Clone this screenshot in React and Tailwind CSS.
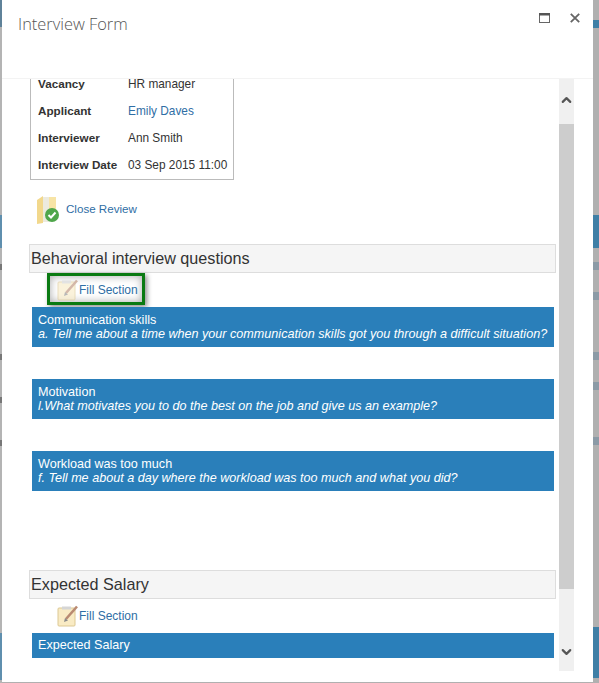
import { ChevronUp, ChevronDown } from "lucide-react";

const details = [
  { label: "Vacancy", value: "HR manager" },
  { label: "Applicant", value: "Emily Daves", link: true },
  { label: "Interviewer", value: "Ann Smith" },
  { label: "Interview Date", value: "03 Sep 2015 11:00" },
];

const questions = [
  {
    title: "Communication skills",
    text: "a. Tell me about a time when your communication skills got you through a difficult situation?",
  },
  {
    title: "Motivation",
    text: "l.What motivates you to do the best on the job and give us an example?",
  },
  {
    title: "Workload was too much",
    text: "f. Tell me about a day where the workload was too much and what you did?",
  },
];

// page behind the dialog, only a sliver of it shows on each side
const leftEdge = [
  { h: 27, color: "#5f8299" },
  { h: 188, color: "#b4b4b4" },
  { h: 33, color: "#5f8fae" },
  { h: 16, color: "#b4b4b4" },
  { h: 6, color: "#777777" },
  { h: 84, color: "#b4b4b4" },
  { h: 6, color: "#777777" },
  { h: 37, color: "#b4b4b4" },
  { h: 6, color: "#777777" },
  { h: 37, color: "#b4b4b4" },
  { h: 6, color: "#777777" },
  { h: 187, color: "#b4b4b4" },
  { h: 47, color: "#5f8fae" },
  { h: 3, color: "#b4b4b4" },
];

const rightEdge = [
  { h: 20, color: "#b0b0b0" },
  { h: 8, color: "#3f7fa6" },
  { h: 187, color: "#b0b0b0" },
  { h: 33, color: "#3f7fa6" },
  { h: 14, color: "#b0b0b0" },
  { h: 8, color: "#8b9aa6" },
  { h: 22, color: "#b0b0b0" },
  { h: 8, color: "#8b9aa6" },
  { h: 52, color: "#b0b0b0" },
  { h: 8, color: "#8b9aa6" },
  { h: 22, color: "#b0b0b0" },
  { h: 8, color: "#8b9aa6" },
  { h: 47, color: "#b0b0b0" },
  { h: 8, color: "#8b9aa6" },
  { h: 182, color: "#b0b0b0" },
  { h: 51, color: "#3f7fa6" },
  { h: 5, color: "#b0b0b0" },
];

function Edge({ parts, className }) {
  return (
    <div className={`flex shrink-0 flex-col ${className}`}>
      {parts.map((p, i) => (
        <div key={i} style={{ height: p.h, backgroundColor: p.color }} />
      ))}
    </div>
  );
}

function NoteIcon() {
  return (
    <svg width="22" height="22" viewBox="0 0 22 22" className="shrink-0">
      <rect x="1" y="3" width="17" height="18" rx="1" fill="#f9ebc4" stroke="#dcc893" />
      <rect x="5" y="1.5" width="9" height="3" fill="#d5d5d5" />
      <path d="M9 14 L20 1.5" stroke="#b98a72" strokeWidth="2.6" />
      <path d="M7 17 L8 13 L11 15.5 Z" fill="#8a8a8a" />
    </svg>
  );
}

function FolderIcon() {
  return (
    <svg width="26" height="32" viewBox="0 0 26 32">
      <path d="M1 7 L7 3 L7 30 L1 31 Z" fill="#f2d88c" />
      <path d="M7 4 H13 V29 H7 Z" fill="#eceade" />
      <path d="M13 4 L20 4 V26 H13 Z" fill="#f7e4a6" />
      <circle cx="16" cy="22" r="7" fill="#4fa64b" />
      <path d="M12.5 22 L15 24.5 L19.5 19.5" fill="none" stroke="#fff" strokeWidth="2" />
    </svg>
  );
}

function FillSection({ highlighted }) {
  return (
    <div className="pl-[17px]">
      <a
        href="#"
        className={`flex h-[32px] w-[98px] items-center border-[3px] pl-[7px] text-[12px] text-[#2f6ea5] ${
          highlighted
            ? "border-[#0a7a12] pt-[1px] shadow-[2px_2px_5px_rgba(0,0,0,0.45),inset_0_0_8px_rgba(0,0,0,0.35)]"
            : "border-transparent"
        }`}
      >
        <span className={highlighted ? "opacity-60" : ""}>
          <NoteIcon />
        </span>
        <span>Fill Section</span>
      </a>
    </div>
  );
}

function SectionHeading({ children }) {
  return (
    <div className="-ml-[1px] flex h-[29px] w-[527px] items-center border border-[#dddddd] bg-[#f5f5f5] pl-[1px] text-[16.2px] text-[#333333]">
      {children}
    </div>
  );
}

export default function App() {
  return (
    <div
      className="flex h-[683px] w-[599px] overflow-hidden bg-[#b0b0b0] text-[12px] text-[#333333]"
      style={{ fontFamily: '"Liberation Sans", Arial, sans-serif' }}
    >
      <Edge parts={leftEdge} className="w-[2px]" />
      <div className="flex h-[682px] w-[591px] shrink-0 flex-col bg-white">
        <div className="flex h-[79px] shrink-0 items-start justify-between border-b border-[#f3f3f3]">
          <h1
            className="mt-[13px] ml-[16px] text-[16.4px] leading-[22px] text-[#555555]"
            style={{ fontFamily: '"Open Sans", sans-serif', fontWeight: 300 }}
          >
            Interview Form
          </h1>
          <div className="mt-[13px] mr-[13px] flex items-center gap-[20px]">
            <svg width="11" height="10" viewBox="0 0 11 10">
              <rect x="0.5" y="0.5" width="10" height="9" fill="none" stroke="#666" />
              <rect x="0" y="0" width="11" height="2.5" fill="#555" />
            </svg>
            <svg width="10" height="10" viewBox="0 0 10 10">
              <path d="M0.8 0.8 L9.2 9.2 M9.2 0.8 L0.8 9.2" stroke="#666" strokeWidth="1.8" />
            </svg>
          </div>
        </div>

        <div className="flex min-h-0 flex-1 pb-[11px]">
          <div className="w-[557px] shrink-0 pl-[28px]">
            <div className="w-[204px] border-x border-b border-[#bbbbbb]">
              {details.map((row) => (
                <div
                  key={row.label}
                  className="grid h-[27px] grid-cols-[90px_1fr] items-center pb-[1px] pl-[7px] leading-[10px] first:h-[19px] first:items-start first:pb-0"
                >
                  <div className="text-[11.7px] font-bold">{row.label}</div>
                  <div className={`text-[11.85px] ${row.link ? "text-[#2f6ea5]" : ""}`}>{row.value}</div>
                </div>
              ))}
            </div>

            <div className="mt-[13px] mb-[19px] flex h-[32px] items-center gap-[4px] pl-[6px] text-[11.6px] text-[#2f6ea5]">
              <FolderIcon />
              <a href="#">Close Review</a>
            </div>

            <SectionHeading>Behavioral interview questions</SectionHeading>
            <FillSection highlighted />

            <div className="mt-[2px] flex flex-col gap-[32px] pl-[2px]">
              {questions.map((q) => (
                <div
                  key={q.title}
                  className="flex h-[40px] w-[522px] flex-col justify-center bg-[#2a7fba] pl-[6px] text-[12.6px] text-white"
                >
                  <div className="leading-[14.5px]">{q.title}</div>
                  <div className="leading-[14.5px] whitespace-nowrap italic">{q.text}</div>
                </div>
              ))}
            </div>

            <div className="mt-[79px]">
              <SectionHeading>Expected Salary</SectionHeading>
            </div>
            <div className="mt-[1px]">
              <FillSection />
            </div>
            <div className="mt-[1px] ml-[2px] flex h-[25px] w-[522px] items-center bg-[#2a7fba] pb-[1px] pl-[6px] text-[12.6px] text-white">
              Expected Salary
            </div>
          </div>

          <div className="flex w-[15px] shrink-0 flex-col bg-[#f0f0f0] text-[#555555]">
            <div className="flex h-[45px] items-center justify-center pb-[4px]">
              <ChevronUp size={20} strokeWidth={3.5} />
            </div>
            <div className="h-[465px] bg-[#cdcdcd]" />
            <div className="flex flex-1 items-end justify-center pb-[9px]">
              <ChevronDown size={20} strokeWidth={3.5} />
            </div>
          </div>
        </div>
      </div>
      <Edge parts={rightEdge} className="w-[6px]" />
    </div>
  );
}
